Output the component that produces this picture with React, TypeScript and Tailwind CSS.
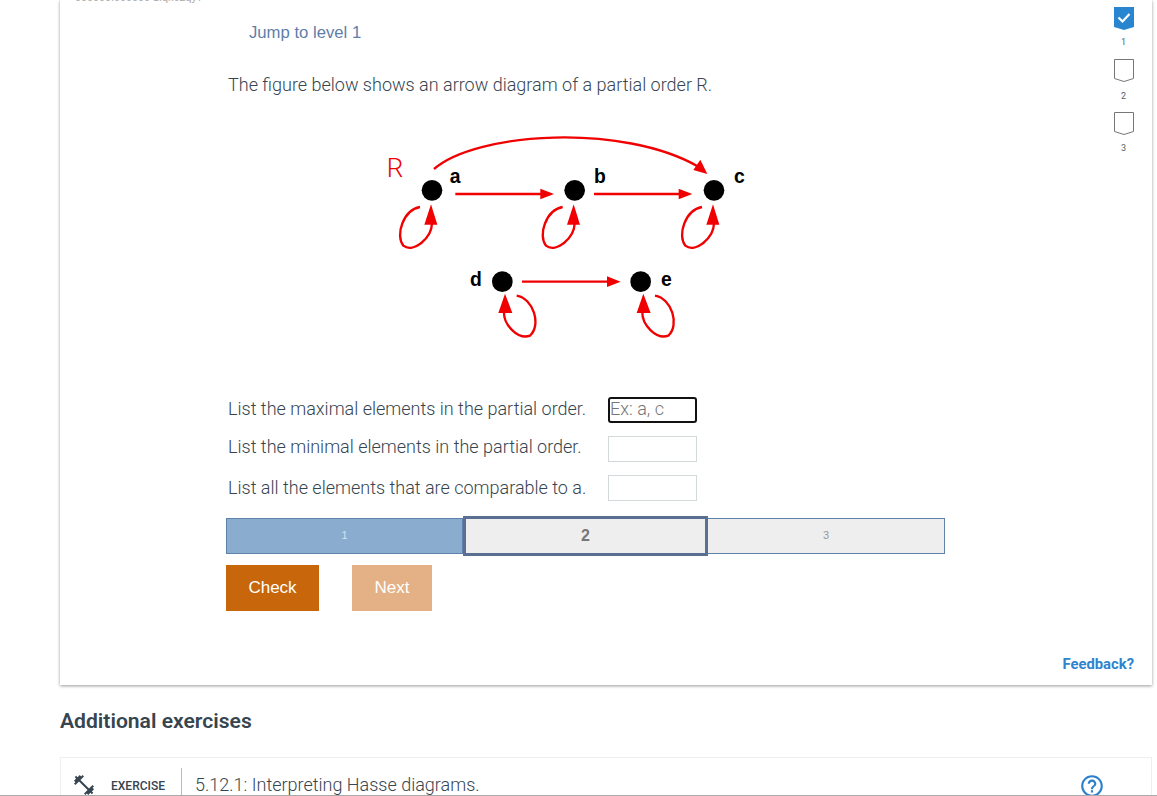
import { MdFitnessCenter, MdHelpOutline } from "react-icons/md";

const RED = "#f00000";

// loop + arrowhead, drawn relative to the node's centre
function LoopLeft({ x, y }: { x: number; y: number }) {
  return (
    <g transform={`translate(${x} ${y})`}>
      <path d="M-36 50 C-86 59 -111 134 -86 166 C-56 189 -1 144 0 99" fill="none" stroke={RED} strokeWidth="7" />
      <polygon points="-3,42 -23,103 16,103" fill={RED} />
    </g>
  );
}

function LoopRight({ x, y }: { x: number; y: number }) {
  return (
    <g transform={`translate(${x} ${y})`}>
      <path d="M43 42 C93 50 118 130 83 162 C48 175 3 130 5 90" fill="none" stroke={RED} strokeWidth="7" />
      <polygon points="8,36 -12,94 30,94" fill={RED} />
    </g>
  );
}

function Arrow({ x1, x2, y }: { x1: number; x2: number; y: number }) {
  return (
    <g>
      <line x1={x1} y1={y} x2={x2 - 30} y2={y} stroke={RED} strokeWidth="7" />
      <polygon points={`${x2},${y} ${x2 - 41},${y - 16} ${x2 - 41},${y + 16}`} fill={RED} />
    </g>
  );
}

function Label({ x, y, children }: { x: number; y: number; children: string }) {
  return (
    <text x={x} y={y} textAnchor="middle" fontSize="58" fontWeight="700" fill="#000" className="font-['Liberation_Sans',sans-serif]">
      {children}
    </text>
  );
}

function Diagram() {
  return (
    <svg viewBox="0 0 1170 675" className="block w-[390px] h-[225px] ml-[310px] mt-[28px]">
      <text x="50" y="155" fontSize="78" fontWeight="300" fill={RED} className="font-['Roboto',sans-serif]">R</text>
      <path d="M192 132 C320 20 760 -5 985 125" fill="none" stroke={RED} strokeWidth="7" />
      <polygon points="1012,147 970,135 991,104" fill={RED} />
      <Arrow x1={256} x2={552} y={207} />
      <Arrow x1={672} x2={967} y={207} />
      <Arrow x1={456} x2={752} y={470} />
      <LoopLeft x={186} y={196} />
      <LoopLeft x={614} y={196} />
      <LoopLeft x={1032} y={196} />
      <LoopRight x={397} y={470} />
      <LoopRight x={812} y={470} />
      <circle cx="186" cy="196" r="31" fill="#000" />
      <circle cx="614" cy="196" r="31" fill="#000" />
      <circle cx="1032" cy="196" r="31" fill="#000" />
      <circle cx="397" cy="470" r="31" fill="#000" />
      <circle cx="812" cy="470" r="31" fill="#000" />
      <Label x={255} y={174}>a</Label>
      <Label x={690} y={174}>b</Label>
      <Label x={1108} y={174}>c</Label>
      <Label x={318} y={483}>d</Label>
      <Label x={889} y={483}>e</Label>
    </svg>
  );
}

function Bookmark({ done }: { done?: boolean }) {
  return (
    <svg viewBox="0 0 20 23" className="block w-[20px] h-[23px]">
      {done ? (
        <>
          <polygon points="0,0 20,0 20,20 10,23 0,20" fill="#2a85d0" />
          <path d="M4.5 10.5 L8.5 14.5 L15.5 7" fill="none" stroke="#fff" strokeWidth="2.2" />
        </>
      ) : (
        <polygon points="0.5,0.5 19.5,0.5 19.5,19.5 10,22.5 0.5,19.5" fill="#fff" stroke="#777" strokeWidth="1" />
      )}
    </svg>
  );
}

function Question({ label, input, className, labelClass }: { label: string; input: React.ReactNode; className: string; labelClass?: string }) {
  return (
    <div className={`flex items-center ${className}`}>
      <span className={`w-[380px] text-[18px] font-light leading-[26px] text-[#36454f] ${labelClass ?? ""}`}>{label}</span>
      {input}
    </div>
  );
}

export default function App() {
  return (
    <div className="h-[796px] box-border overflow-hidden border-b border-[#aaaaaa] bg-white font-['Roboto',sans-serif]">
      <div className="ml-[60px] w-[1092px] h-[685px] bg-white shadow-[0_1px_3px_rgba(0,0,0,0.4)] flex">
        {/* Main column */}
        <div className="flex-1 relative overflow-hidden">
          <div className="-mt-[8px] ml-[15px] h-[11px] text-[10.8px] leading-[11px] text-[#aaaaaa] font-['Liberation_Sans',sans-serif]">
            000000.000000 1.qk62qy7
          </div>
          <div className="ml-[189px] mt-[18px] text-[16.7px] leading-[24px] text-[#5f7ea8] font-['Liberation_Sans',sans-serif]">
            Jump to level 1
          </div>
          <div className="ml-[168px] mt-[28px] text-[18px] font-light leading-[24px] text-[#36454f]">
            The figure below shows an arrow diagram of a partial order R.
          </div>
          <Diagram />
          <div className="ml-[168px] mt-[47px]">
            <Question
              label="List the maximal elements in the partial order."
              className="h-[26px]"
              labelClass="pb-[2px]"
              input={
                <div className="box-border w-[89px] h-[26px] rounded-[3px] border-2 border-[#111111] text-[18px] font-light leading-[20px] text-[#757575]">
                  Ex: a, c
                </div>
              }
            />
            <Question
              label="List the minimal elements in the partial order."
              className="h-[26px] mt-[13px]"
              labelClass="pb-[4px]"
              input={<div className="box-border w-[89px] h-[26px] border border-[#d3d8da]" />}
            />
            <Question
              label="List all the elements that are comparable to a."
              className="h-[26px] mt-[13px]"
              input={<div className="box-border w-[89px] h-[26px] border border-[#d3d8da]" />}
            />
          </div>
          <div className="ml-[166px] mt-[17px] w-[719px] h-[36px] flex items-center text-center font-['Liberation_Sans',sans-serif]">
            <div className="box-border w-[237px] h-[36px] bg-[#8aaccf] border border-[#5f82ab] text-[11px] leading-[33px] text-[#d5e2ef]">1</div>
            <div className="box-border w-[245px] h-[40px] bg-[#eeeeee] border-[3px] border-[#5a6f91] text-[16px] font-bold leading-[34px] text-[#777777]">2</div>
            <div className="box-border flex-1 h-[36px] bg-[#eeeeee] border border-[#5f82ab] border-l-0 text-[11px] leading-[33px] text-[#999999]">3</div>
          </div>
          <div className="ml-[166px] mt-[11px] flex gap-[33px] font-['Liberation_Sans',sans-serif] text-[17px] text-white">
            <div className="w-[93px] h-[46px] bg-[#c7660a] flex items-center justify-center">Check</div>
            <div className="w-[80px] h-[46px] bg-[#e3b185] flex items-center justify-center">Next</div>
          </div>
        </div>
        {/* Right rail */}
        <div className="w-[94px] pr-[18px] flex flex-col items-end justify-between">
          <div className="mt-[7px] flex flex-col items-center w-[20px] text-[9px] leading-[12px] text-[#555f66]">
            <Bookmark done />
            <span className="mt-[6px] mb-[11px] -ml-[1px]">1</span>
            <Bookmark />
            <span className="mt-[8px] mb-[10px] -ml-[1px]">2</span>
            <Bookmark />
            <span className="mt-[7px] -ml-[1px]">3</span>
          </div>
          <div className="mb-[12px] text-[14.8px] font-bold leading-[18px] text-[#2f84cf] whitespace-nowrap">Feedback?</div>
        </div>
      </div>

      <h2 className="ml-[60px] mt-[23px] text-[21.1px] font-semibold leading-[26px] text-[#36454f]">Additional exercises</h2>

      <div className="ml-[60px] mt-[23px] w-[1092px] h-[60px] box-border border border-[#eeeeee] flex items-start">
        <MdFitnessCenter className="ml-[11px] mt-[15px] text-[#36454f]" size={24} />
        <span className="ml-[15px] mt-[19px] text-[12px] font-medium leading-[18px] text-[#36454f]">EXERCISE</span>
        <div className="ml-[16px] mt-[10px] w-[1px] h-[40px] bg-[#bbbbbb]" />
        <span className="ml-[13px] mt-[15px] text-[18px] font-light leading-[24px] text-[#36454f]">5.12.1: Interpreting Hasse diagrams.</span>
        <MdHelpOutline className="ml-auto mr-[46px] mt-[15px] text-[#2a80cc]" size={26} />
      </div>
    </div>
  );
}
